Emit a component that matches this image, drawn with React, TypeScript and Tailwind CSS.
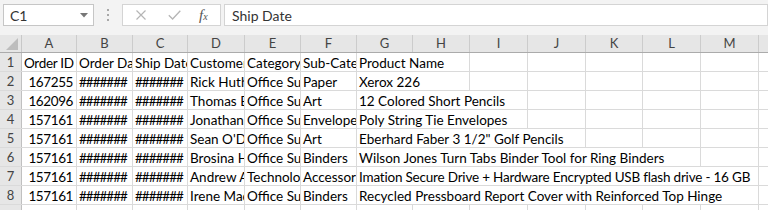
import React from "react";

const widths = [55, 56, 55, 57, 56, 56, 56, 57, 58, 58, 57, 58, 58];
const letters = ["A", "B", "C", "D", "E", "F", "G", "H", "I", "J", "K", "L", "M"];

type Row = {
  id: string;
  name: string;
  cat: string;
  sub: string;
  prod: string;
  span: number;
  hdr?: boolean;
  tight?: boolean;
};

const rows: Row[] = [
  { id: "Order ID", name: "Customer Name", cat: "Category", sub: "Sub-Category", prod: "Product Name", span: 2, hdr: true },
  { id: "167255", name: "Rick Huthwaite", cat: "Office Supplies", sub: "Paper", prod: "Xerox 226", span: 2 },
  { id: "162096", name: "Thomas Boland", cat: "Office Supplies", sub: "Art", prod: "12 Colored Short Pencils", span: 3 },
  { id: "157161", name: "Jonathan Doherty", cat: "Office Supplies", sub: "Envelopes", prod: "Poly String Tie Envelopes", span: 3 },
  { id: "157161", name: "Sean O'Donnell", cat: "Office Supplies", sub: "Art", prod: 'Eberhard Faber 3 1/2" Golf Pencils', span: 4 },
  { id: "157161", name: "Brosina Hoffman", cat: "Office Supplies", sub: "Binders", prod: "Wilson Jones Turn Tabs Binder Tool for Ring Binders", span: 6 },
  { id: "157161", name: "Andrew Allen", cat: "Technology", sub: "Accessories", prod: "Imation Secure Drive + Hardware Encrypted USB flash drive - 16 GB", span: 7, tight: true },
  { id: "157161", name: "Irene Maddox", cat: "Office Supplies", sub: "Binders", prod: "Recycled Pressboard Report Cover with Reinforced Top Hinge", span: 7 },
];

const cellBase =
  "h-full shrink-0 border-r border-[#dadada] overflow-hidden whitespace-nowrap flex items-center pt-[2px]";

function Cell({
  w,
  children,
  right,
  extra,
}: {
  w: number;
  children?: React.ReactNode;
  right?: boolean;
  extra?: string;
}) {
  return (
    <div
      className={cellBase + (right ? " justify-end pr-[3px]" : " pl-[2px]") + (extra ? " " + extra : "")}
      style={{ width: w }}
    >
      {children}
    </div>
  );
}

export default function App() {
  return (
    <div className="w-[768px] h-[210px] overflow-hidden bg-white font-['Lato',sans-serif] text-[13.5px] text-black">
      {/* Formula bar area */}
      <div className="h-[35px] bg-[#f3f3f3] flex items-start pt-[4px]">
        <div className="ml-[3px] w-[91px] h-[22px] bg-white border border-[#c6c6c6] flex items-center justify-between pl-[6px] pr-[5px]">
          <span className="text-[14px] text-[#333]">C1</span>
          <svg width="8" height="5" viewBox="0 0 8 5">
            <path d="M0 0 L8 0 L4 4.5 Z" fill="#777" />
          </svg>
        </div>
        <div className="w-[28px] h-[22px] flex flex-col items-center justify-center gap-[3px]">
          <div className="w-[2px] h-[2px] bg-[#a8a8a8]" />
          <div className="w-[2px] h-[2px] bg-[#a8a8a8]" />
          <div className="w-[2px] h-[2px] bg-[#a8a8a8]" />
        </div>
        <div className="w-[99px] h-[22px] bg-white border border-[#d4d4d4] flex items-center">
          <svg className="ml-[13px]" width="10" height="10" viewBox="0 0 10 10">
            <path d="M0.5 0.5 L9.5 9.5 M9.5 0.5 L0.5 9.5" stroke="#b5b5b5" strokeWidth="1.2" fill="none" />
          </svg>
          <svg className="ml-[22px]" width="13" height="10" viewBox="0 0 13 10">
            <path d="M0.8 5.2 L4.6 9 L12.3 0.8" stroke="#b5b5b5" strokeWidth="1.3" fill="none" />
          </svg>
          <span className="ml-[18px] font-['Liberation_Serif',serif] italic text-[15px] text-[#555] leading-none">
            f<span className="text-[10px] font-['Liberation_Serif',serif] italic">x</span>
          </span>
        </div>
        <div className="ml-[3px] flex-1 h-[22px] bg-white border border-[#d4d4d4] flex items-center pl-[7px]">
          <span className="text-[14px] text-[#333]">Ship Date</span>
        </div>
      </div>

      {/* Column headers */}
      <div className="h-[18px] flex bg-[#e6e6e6] border-b border-[#ababab]">
        <div className="w-[22px] h-full shrink-0 border-r border-[#c8c8c8] relative">
          <svg className="absolute left-[6px] top-[3px]" width="12" height="12" viewBox="0 0 12 12">
            <path d="M12 0 L12 12 L0 12 Z" fill="#bdbdbd" />
          </svg>
        </div>
        {letters.map((l, i) => (
          <div
            key={l}
            className="h-full shrink-0 border-r border-[#cccccc] flex items-center justify-center text-[13px] text-[#444]"
            style={{ width: widths[i] }}
          >
            {l}
          </div>
        ))}
        <div className="flex-1" />
      </div>

      {/* Data rows */}
      {rows.map((r, ri) => {
        const prodW = widths.slice(6, 6 + r.span).reduce((a, b) => a + b, 0);
        const rest = widths.slice(6 + r.span);
        return (
          <div key={ri} className="h-[19px] flex border-b border-[#dadada]">
            <div className="w-[22px] h-full shrink-0 bg-[#e6e6e6] border-r border-[#c0c0c0] flex items-center justify-center pt-[2px] text-[13px] text-[#444]">
              {ri + 1}
            </div>
            <Cell w={widths[0]} right={!r.hdr} extra={r.hdr ? "tracking-[-0.3px]" : "tracking-[-0.4px]"}>
              {r.id}
            </Cell>
            <Cell w={widths[1]} extra={r.hdr ? "" : "tracking-[-1px]"}>
              {r.hdr ? "Order Date" : "#######"}
            </Cell>
            <Cell w={widths[2]} extra={r.hdr ? "" : "tracking-[-1px]"}>
              {r.hdr ? "Ship Date" : "#######"}
            </Cell>
            <Cell w={widths[3]}>{r.name}</Cell>
            <Cell w={widths[4]}>{r.cat}</Cell>
            <Cell w={widths[5]}>{r.sub}</Cell>
            <Cell w={prodW} extra={r.tight ? "tracking-[-0.2px]" : ""}>
              {r.prod}
            </Cell>
            {rest.map((w, k) => (
              <Cell key={k} w={w} />
            ))}
            <div className="flex-1" />
          </div>
        );
      })}
      <div className="h-[19px] flex">
        <div className="w-[22px] h-full shrink-0 bg-[#e6e6e6] border-r border-[#c0c0c0]" />
        {widths.map((w, k) => (
          <Cell key={k} w={w} />
        ))}
      </div>
    </div>
  );
}
